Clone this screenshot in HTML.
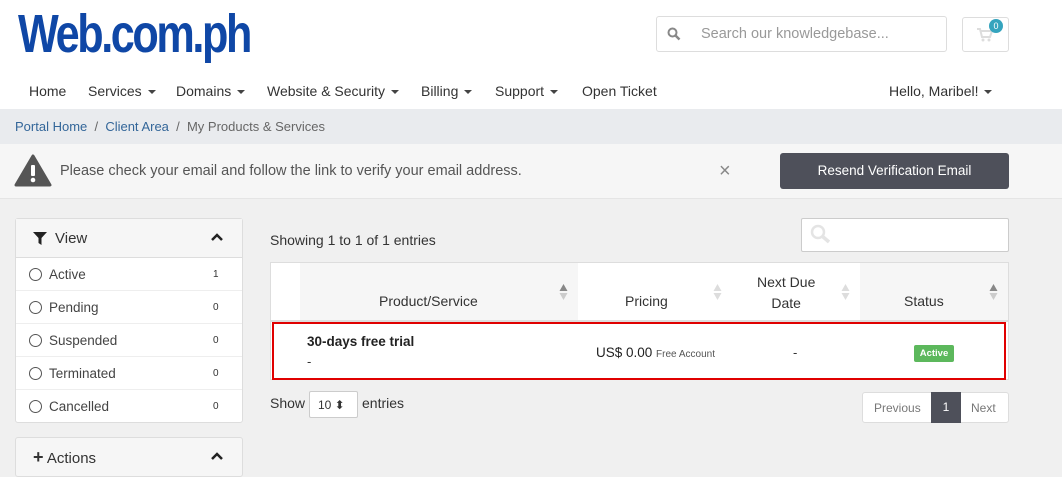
<!DOCTYPE html>
<html><head><style>
*{box-sizing:border-box;margin:0;padding:0}
body{width:1062px;height:460px;overflow:hidden;background:#f0f0f0;font-family:"Liberation Sans",sans-serif;color:#333;position:relative;font-size:14px}
.a{position:absolute}
.caret{display:inline-block;border-left:4px solid transparent;border-right:4px solid transparent;border-top:4px solid #444;vertical-align:middle;margin-left:6px}
</style></head><body>
<div class="a" style="left:0;top:0;width:1062px;height:109px;background:#fff"></div>
<div class="a" style="left:18px;top:3px;font-size:54px;font-weight:bold;color:#0f47a6;letter-spacing:-3px;transform:scaleX(0.8);transform-origin:left;font-family:'Liberation Sans',sans-serif">Web.com.ph</div>
<div class="a" style="left:656px;top:16px;width:291px;height:36px;border:1px solid #ddd;border-radius:3px;background:#fff"></div>
<svg class="a" style="left:667px;top:27px" width="14" height="14"><circle cx="5.5" cy="5.5" r="4" fill="none" stroke="#888" stroke-width="2"/><line x1="8.5" y1="8.5" x2="12.5" y2="12.5" stroke="#888" stroke-width="2.5"/></svg>
<div class="a" style="left:701px;top:26px;color:#999;font-size:14.5px">Search our knowledgebase...</div>
<div class="a" style="left:962px;top:17px;width:47px;height:35px;border:1px solid #ddd;border-radius:3px;background:#fff"></div>
<svg class="a" style="left:977px;top:28px" width="16" height="14"><path d="M0 1 H3 L5 9 H13 L15 3 H4" fill="none" stroke="#ddd" stroke-width="2"/><circle cx="6" cy="12" r="1.5" fill="#ddd"/><circle cx="12" cy="12" r="1.5" fill="#ddd"/></svg>
<div class="a" style="left:989px;top:19px;width:14px;height:14px;border-radius:7px;background:#35a4be;color:#fff;font-size:9px;text-align:center;line-height:14px">0</div>
<div class="a" style="left:29px;top:83px;font-size:14px;color:#333">Home</div>
<div class="a" style="left:88px;top:83px">Services<span class="caret"></span></div>
<div class="a" style="left:176px;top:83px">Domains<span class="caret"></span></div>
<div class="a" style="left:267px;top:83px">Website &amp; Security<span class="caret"></span></div>
<div class="a" style="left:421px;top:83px">Billing<span class="caret"></span></div>
<div class="a" style="left:495px;top:83px">Support<span class="caret"></span></div>
<div class="a" style="left:582px;top:83px">Open Ticket</div>
<div class="a" style="left:889px;top:83px">Hello, Maribel!<span class="caret"></span></div>
<div class="a" style="left:0;top:109px;width:1062px;height:35px;background:#e9ebee"></div>
<div class="a" style="left:15px;top:119px;font-size:13px;color:#666"><span style="color:#336699">Portal Home</span> &nbsp;/&nbsp; <span style="color:#336699">Client Area</span> &nbsp;/&nbsp; My Products &amp; Services</div>
<div class="a" style="left:0;top:144px;width:1062px;height:55px;background:#f6f6f6;border-bottom:1px solid #e5e5e5"></div>
<svg class="a" style="left:14px;top:154px" width="38" height="33"><path d="M19 2 L36 31 L2 31 Z" fill="#555" stroke="#555" stroke-width="3" stroke-linejoin="round"/><rect x="17" y="11" width="4" height="11" rx="1" fill="#fff"/><circle cx="19" cy="26" r="2.3" fill="#fff"/></svg>
<div class="a" style="left:60px;top:163px;font-size:14.5px;color:#555">Please check your email and follow the link to verify your email address.</div>
<div class="a" style="left:719px;top:160px;font-size:20px;color:#888">×</div>
<div class="a" style="left:780px;top:153px;width:229px;height:36px;background:#4e505a;border-radius:3px;color:#fff;text-align:center;line-height:36px;font-size:13.5px">Resend Verification Email</div>
<div class="a" style="left:15px;top:218px;width:228px;height:205px;background:#fff;border:1px solid #ddd;border-radius:3px"></div>
<div class="a" style="left:16px;top:219px;width:226px;height:39px;background:#f6f6f6;border-bottom:1px solid #ddd"></div>
<svg class="a" style="left:33px;top:232px" width="14" height="13"><path d="M0 0 H14 L8.5 6 V13 L5.5 11 V6 Z" fill="#222"/></svg>
<div class="a" style="left:55px;top:230px;font-size:15px;color:#333">View</div>
<svg class="a" style="left:211px;top:233px" width="12" height="8"><path d="M1 7 L6 2 L11 7" fill="none" stroke="#222" stroke-width="2.5"/></svg>
<div class="a" style="left:16px;top:258px;width:226px">
<div style="height:33px;border-bottom:1px solid #eee;position:relative"><span class="a" style="left:13px;top:10px;width:13px;height:13px;border:1.5px solid #555;border-radius:50%"></span><span class="a" style="left:33px;top:9px;font-size:13.5px;color:#444">Active</span><span class="a" style="left:197px;top:11px;font-size:10px">1</span></div>
<div style="height:33px;border-bottom:1px solid #eee;position:relative"><span class="a" style="left:13px;top:10px;width:13px;height:13px;border:1.5px solid #555;border-radius:50%"></span><span class="a" style="left:33px;top:9px;font-size:13.5px;color:#444">Pending</span><span class="a" style="left:197px;top:11px;font-size:10px">0</span></div>
<div style="height:33px;border-bottom:1px solid #eee;position:relative"><span class="a" style="left:13px;top:10px;width:13px;height:13px;border:1.5px solid #555;border-radius:50%"></span><span class="a" style="left:33px;top:9px;font-size:13.5px;color:#444">Suspended</span><span class="a" style="left:197px;top:11px;font-size:10px">0</span></div>
<div style="height:33px;border-bottom:1px solid #eee;position:relative"><span class="a" style="left:13px;top:10px;width:13px;height:13px;border:1.5px solid #555;border-radius:50%"></span><span class="a" style="left:33px;top:9px;font-size:13.5px;color:#444">Terminated</span><span class="a" style="left:197px;top:11px;font-size:10px">0</span></div>
<div style="height:33px;position:relative"><span class="a" style="left:13px;top:10px;width:13px;height:13px;border:1.5px solid #555;border-radius:50%"></span><span class="a" style="left:33px;top:9px;font-size:13.5px;color:#444">Cancelled</span><span class="a" style="left:197px;top:11px;font-size:10px">0</span></div>
</div>
<div class="a" style="left:15px;top:437px;width:228px;height:40px;background:#f6f6f6;border:1px solid #ddd;border-radius:3px"></div>
<div class="a" style="left:33px;top:447px;font-size:15px;color:#333"><b style="font-size:18px">+</b> Actions</div>
<svg class="a" style="left:211px;top:452px" width="12" height="8"><path d="M1 7 L6 2 L11 7" fill="none" stroke="#222" stroke-width="2.5"/></svg>
<div class="a" style="left:270px;top:232px;font-size:14px">Showing 1 to 1 of 1 entries</div>
<div class="a" style="left:801px;top:218px;width:208px;height:34px;background:#fff;border:1px solid #ccc;border-radius:2px"></div>
<svg class="a" style="left:809px;top:223px" width="24" height="22"><circle cx="9" cy="9" r="6" fill="none" stroke="#e4e4e4" stroke-width="2.5"/><line x1="13" y1="13" x2="20" y2="19" stroke="#e4e4e4" stroke-width="3.5"/></svg>
<div class="a" style="left:270px;top:262px;width:739px;height:118px;background:#fff;border:1px solid #ddd"></div>
<div class="a" style="left:300px;top:263px;width:278px;height:58px;background:#f6f6f6"></div>
<div class="a" style="left:860px;top:263px;width:148px;height:58px;background:#f6f6f6"></div>
<div class="a" style="left:271px;top:320px;width:737px;height:2px;background:#ddd"></div>
<div class="a" style="left:379px;top:293px">Product/Service</div>
<div class="a" style="left:625px;top:293px">Pricing</div>
<div class="a" style="left:757px;top:272px;text-align:center;line-height:21px">Next Due<br>Date</div>
<div class="a" style="left:904px;top:293px">Status</div>
<svg class="a" style="left:559px;top:284px" width="9" height="16"><path d="M4.5 0 L8.5 7 H0.5Z" fill="#888"/><path d="M4.5 16 L8.5 9 H0.5Z" fill="#ccc"/></svg>
<svg class="a" style="left:713px;top:284px" width="9" height="16"><path d="M4.5 0 L8.5 7 H0.5Z" fill="#ddd"/><path d="M4.5 16 L8.5 9 H0.5Z" fill="#ddd"/></svg>
<svg class="a" style="left:841px;top:284px" width="9" height="16"><path d="M4.5 0 L8.5 7 H0.5Z" fill="#ddd"/><path d="M4.5 16 L8.5 9 H0.5Z" fill="#ddd"/></svg>
<svg class="a" style="left:989px;top:284px" width="9" height="16"><path d="M4.5 0 L8.5 7 H0.5Z" fill="#888"/><path d="M4.5 16 L8.5 9 H0.5Z" fill="#ccc"/></svg>
<div class="a" style="left:272px;top:322px;width:734px;height:58px;border:2.5px solid #e00000"></div>
<div class="a" style="left:307px;top:334px;font-size:13.5px;font-weight:bold;color:#222">30-days free trial</div>
<div class="a" style="left:307px;top:354px;font-size:13px">-</div>
<div class="a" style="left:596px;top:345px;font-size:13.5px;color:#222">US$ 0.00 <span style="font-size:10px;color:#555">Free Account</span></div>
<div class="a" style="left:793px;top:345px;font-size:13px">-</div>
<div class="a" style="left:914px;top:345px;width:40px;height:17px;background:#5cb85c;color:#fff;font-size:9.5px;font-weight:bold;text-align:center;line-height:17px;border-radius:2px">Active</div>
<div class="a" style="left:270px;top:395px">Show</div>
<div class="a" style="left:309px;top:391px;width:49px;height:27px;background:#fff;border:1px solid #ccc;border-radius:2px;font-size:12px;padding:6px 0 0 8px">10 ⬍</div>
<div class="a" style="left:362px;top:395px">entries</div>
<div class="a" style="left:862px;top:392px;width:147px;height:31px;background:#fff;border:1px solid #ddd;border-radius:3px"></div>
<div class="a" style="left:874px;top:401px;font-size:12px;color:#777">Previous</div>
<div class="a" style="left:931px;top:392px;width:30px;height:31px;background:#4e505a;color:#fff;font-size:12px;text-align:center;line-height:31px">1</div>
<div class="a" style="left:971px;top:401px;font-size:12px;color:#777">Next</div>
</body></html>
